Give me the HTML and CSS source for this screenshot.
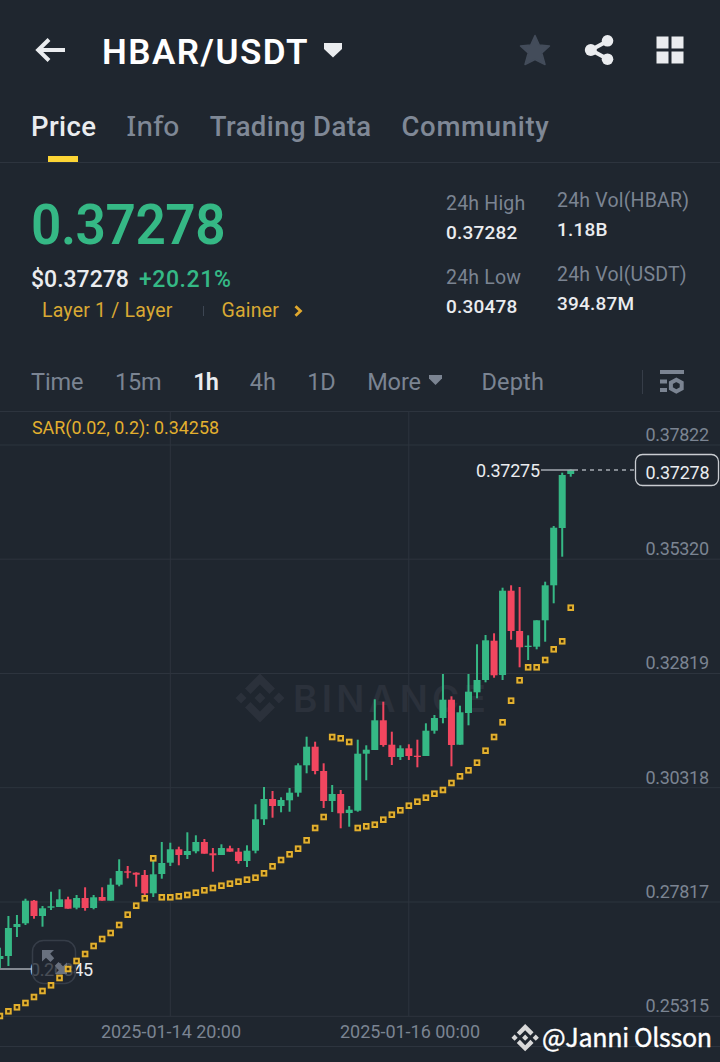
FILE: index.html
```html
<!DOCTYPE html>
<html lang="en">

<head>
    <meta charset="UTF-8">
    <meta name="viewport" content="width=device-width, initial-scale=1.0">
    <title>HBAR/USDT</title>
    <link rel="stylesheet" href="styles.css">
</head>

<body>
    <header class="topbar">
        <svg class="back" width="32" height="26" viewBox="0 0 32 26">
            <path d="M15 2.5 4.2 13 15 23.5M4.5 13H31" fill="none" stroke="#eaecef" stroke-width="4" />
        </svg>
        <h1>HBAR/USDT</h1>
        <svg class="pair-caret" width="18" height="15" viewBox="0 0 18 15">
            <path d="M0 0h18v6L9 14.500 0 6z" fill="#eaecef" />
        </svg>
        <div class="actions">
            <svg width="32" height="32" viewBox="0 0 32 32">
                <path d="M16 1.500 20.300 11 30.500 12 22.800 18.900 26 30.500 16 25.500 6 30.500 9.200 18.900 1.500 12 11.700 11z" fill="#434c5a" stroke="#434c5a" stroke-width="1.500" stroke-linejoin="round" />
            </svg>
            <svg width="30" height="32" viewBox="0 0 30 32">
                <path d="M23.500 7 7 16 23.500 25" fill="none" stroke="#eaecef" stroke-width="4" />
                <circle cx="23.500" cy="6.800" r="5.800" fill="#eaecef" />
                <circle cx="6.800" cy="16" r="6" fill="#eaecef" />
                <circle cx="23.500" cy="25.200" r="5.800" fill="#eaecef" />
            </svg>
            <svg width="28" height="28" viewBox="0 0 28 28">
                <path d="M.5.5h12v12H.5zM15.500.5h12v12h-12zM.5 15.500h12v12H.5zM15.500 15.500h12v12h-12z" fill="#eaecef" />
            </svg>
        </div>
    </header>

    <nav class="tabs">
        <a class="active">Price</a>
        <a class="info">Info</a>
        <a>Trading Data</a>
        <a class="community">Community</a>
    </nav>

    <section class="summary">
        <div class="quote">
            <div class="price">0.37278</div>
            <div class="sub"><span class="usd">$0.37278</span><span class="change">+20.21%</span></div>
            <div class="tags">
                <span>Layer 1 / Layer</span>
                <i></i>
                <span>Gainer</span>
                <svg width="9" height="12" viewBox="0 0 9 12">
                    <path d="M1.500 1.200 6.500 6l-5 4.800" fill="none" stroke="#e0a82e" stroke-width="2.800" />
                </svg>
            </div>
        </div>
        <dl class="stats">
            <dt>24h High</dt>
            <dd>0.37282</dd>
            <dt>24h Low</dt>
            <dd>0.30478</dd>
        </dl>
        <dl class="stats volume">
            <dt>24h Vol(HBAR)</dt>
            <dd>1.18B</dd>
            <dt>24h Vol(USDT)</dt>
            <dd>394.87M</dd>
        </dl>
    </section>

    <div class="intervals">
        <span>Time</span>
        <span>15m</span>
        <span class="active">1h</span>
        <span>4h</span>
        <span>1D</span>
        <span class="more">More
            <svg width="13" height="10" viewBox="0 0 13 10">
                <path d="M0 0h13v3.500L6.500 10 0 3.500z" fill="#7b8492" />
            </svg>
        </span>
        <span class="depth">Depth</span>
        <div class="settings">
            <svg width="24" height="24" viewBox="0 0 24 24">
                <path d="M0 0h24v4H0zM0 9.500h7v4H0zM0 18h7v4H0z" fill="#7b8492" />
                <path d="M16.300 9.700 21.700 12.700v5.800l-5.400 3-5.400-3v-5.800z" fill="none" stroke="#7b8492" stroke-width="4" />
            </svg>
        </div>
    </div>

    <svg id="chart" width="720" height="651" viewBox="0 411 720 651">
        <g class="grid">
            <path d="M0 411.500H720M0 445H720M0 559.200H720M0 673.500H720M0 787.700H720M0 902H720M0 1016.300H720M0 1046.500H720" />
            <path d="M170.300 411V1016M408.800 411V1016" />
        </g>
        <g class="brand">
            <path transform="translate(235.500 673.500) scale(2.040)" d="M16.624 13.920l2.718 2.715-7.353 7.353-7.353-7.352 2.717-2.716 4.636 4.659zM21.261 9.284L24 12l-2.715 2.716L18.568 12zM11.989 9.285l2.716 2.691-2.716 2.717L9.272 12zM2.716 9.284L5.409 12l-2.692 2.692L0 12zM11.989.012l7.353 7.329-2.718 2.715-4.635-4.635-4.636 4.659-2.717-2.715z" />
            <text x="293" y="711.500" textLength="193">BINANCE</text>
        </g>
        <text class="sar-label" x="32" y="434" textLength="187" lengthAdjust="spacingAndGlyphs">SAR(0.02, 0.2): 0.34258</text>
        <g class="axis">
            <text x="645.500" y="441" textLength="63.500">0.37822</text>
            <text x="645.500" y="555" textLength="63.500">0.35320</text>
            <text x="645.500" y="669.300" textLength="63.500">0.32819</text>
            <text x="645.500" y="783.700" textLength="63.500">0.30318</text>
            <text x="645.500" y="898" textLength="63.500">0.27817</text>
            <text x="645.500" y="1012.300" textLength="63.500">0.25315</text>
            <text x="101" y="1038" textLength="140">2025-01-14 20:00</text>
            <text x="340" y="1038" textLength="140">2025-01-16 00:00</text>
        </g>
        <g id="candles"></g>
        <g class="marks">
            <path d="M541 470H574M0 969H32" />
            <path d="M574 470H635" stroke-dasharray="4 4" />
            <text x="476" y="477" textLength="64">0.37275</text>
            <text x="30" y="976" textLength="63">0.26345</text>
            <rect class="tag" x="635.500" y="454.500" width="83" height="31" rx="7" />
            <text x="645.500" y="478.700" textLength="64">0.37278</text>
        </g>
        <g class="expand">
            <rect x="32.500" y="940.500" width="43" height="43" rx="11" />
            <path d="M42 950h12l-3.800 3.800 4 4.500-3.700 3.700-4.500-4.200L42 961.500zM67 974H55l3.800-3.800-4-4.500 3.700-3.700 4.500 4.200 4-3.700z" />
        </g>
        <g id="sar"></g>
        <g class="author">
            <path transform="translate(511.500 1024) scale(1.140)" d="M16.624 13.920l2.718 2.715-7.353 7.353-7.353-7.352 2.717-2.716 4.636 4.659zM21.261 9.284L24 12l-2.715 2.716L18.568 12zM11.989 9.285l2.716 2.691-2.716 2.717L9.272 12zM2.716 9.284L5.409 12l-2.692 2.692L0 12zM11.989.012l7.353 7.329-2.718 2.715-4.635-4.635-4.636 4.659-2.717-2.715z" />
            <text x="542" y="1047" textLength="170">@Janni Olsson</text>
        </g>
    </svg>

    <script src="chart.js"></script>
</body>

</html>
```
FILE: styles.css
```css
* {
    margin: 0;
    padding: 0;
    box-sizing: border-box;
}

body {
    width: 720px;
    height: 1062px;
    overflow: hidden;
    background-color: #1f262f;
    color: #eaecef;
    font-family: Roboto, "Liberation Sans", sans-serif;
}

svg {
    display: block;
    flex: none;
}

.topbar {
    display: flex;
    align-items: center;
    height: 100px;
    padding: 0 36px 0 34px;
}

.topbar h1 {
    margin-left: 36px;
    padding-top: 4px;
    width: 207px;
    font-size: 35px;
    font-weight: 600;
    letter-spacing: 1.5px;
    color: #fff;
    white-space: nowrap;
}

.pair-caret {
    margin-left: 15px;
}

.actions {
    display: flex;
    align-items: center;
    margin-left: auto;
}

.actions svg + svg {
    margin-left: 33px;
}

.actions svg:last-child {
    margin-left: 42px;
}

.tabs {
    display: flex;
    gap: 30px;
    height: 63px;
    padding-left: 31px;
    border-bottom: 1px solid #2d343e;
    font-size: 27.5px;
    font-weight: 500;
    line-height: 54px;
    letter-spacing: 0.4px;
    color: #7f8896;
}

.tabs a {
    position: relative;
    white-space: nowrap;
}

.tabs .active {
    color: #eaecef;
}

.tabs .active::after {
    content: "";
    position: absolute;
    left: 17px;
    bottom: 0;
    width: 30px;
    height: 6px;
    background-color: #fcd535;
}

.tabs .info {
    font-family: "Noto Sans", sans-serif;
    font-size: 27px;
    line-height: 52px;
    letter-spacing: 0.2px;
}

.tabs .community {
    letter-spacing: 0.7px;
}

.summary {
    display: flex;
    height: 189px;
    padding-left: 31px;
}

.quote {
    width: 415px;
    padding-top: 28px;
}

.price {
    height: 69px;
    line-height: 68px;
    font-size: 56px;
    font-weight: 600;
    letter-spacing: -0.5px;
    color: #35b885;
    transform: scaleX(0.95);
    transform-origin: left;
}

.sub {
    display: flex;
    gap: 10px;
    line-height: 39px;
    font-size: 23px;
    font-weight: 500;
}

.usd {
    letter-spacing: 0;
}

.change {
    color: #35b885;
    letter-spacing: 0.6px;
}

.tags {
    display: flex;
    align-items: center;
    height: 23px;
    padding-left: 11px;
    font-size: 19.5px;
    letter-spacing: 0.2px;
    color: #d9a933;
}

.tags i {
    width: 1px;
    height: 10px;
    margin: 0 18px 0 30px;
    background-color: #3d4653;
}

.tags svg {
    margin-left: 15px;
}

.stats {
    width: 111px;
    padding-top: 27px;
    font-size: 19.5px;
    white-space: nowrap;
}

.stats dt {
    line-height: 28px;
    color: #7b8492;
    letter-spacing: 0.2px;
}

.stats dd {
    height: 46px;
    line-height: 30px;
    font-size: 19px;
    font-weight: 500;
    letter-spacing: 0.2px;
}

.volume {
    padding-top: 24px;
}

.intervals {
    display: flex;
    align-items: center;
    gap: 31.5px;
    height: 59px;
    padding: 0 36px 0 31px;
    font-size: 23.5px;
    letter-spacing: -0.1px;
    color: #7b8492;
}

.intervals .active {
    color: #eaecef;
    font-weight: 600;
    letter-spacing: -0.7px;
}

.more {
    display: flex;
    align-items: center;
    gap: 8px;
    margin-right: 8px;
}

.more svg {
    margin-top: -3px;
}

.depth {
    letter-spacing: 0.2px;
}

.settings {
    margin-left: auto;
    padding-left: 17px;
    border-left: 1.5px solid #363d48;
}

.grid path {
    stroke: #2d343e;
}

.brand {
    fill: #2b313b;
    font: 600 37px Inter, sans-serif;
}

.sar-label {
    fill: #e3b02e;
    font-size: 18px;
}

.axis {
    fill: #7b8492;
    font-size: 18px;
}

.marks {
    fill: #eaecef;
    font-size: 18px;
}

.marks path {
    stroke: #a5aab2;
    stroke-width: 1.5;
}

.marks .tag {
    fill: #1f262f;
    stroke: #c9ccd1;
    stroke-width: 1.3;
}

.expand rect {
    fill: rgba(31, 38, 47, 0.8);
    stroke: #363d48;
    stroke-width: 1.5;
}

.expand path {
    fill: #69717f;
}

.up {
    fill: #35b885;
}

.down {
    fill: #f1465f;
}

#sar rect {
    fill: #3b2c0d;
    stroke: #e3b02e;
    stroke-width: 2;
}

.author {
    fill: #d9d9d9;
}

.author text {
    fill: #fff;
    font: 400 25px "Noto Sans CJK SC", sans-serif;
    stroke: #fff;
    stroke-width: 0.4;
}
```
FILE: chart.js
```js
// high, body top, body bottom, low, direction (1 up, 0 down), sar
const candles = [
    [947.7, 956, 959, 968, 1, 1016],
    [916, 928, 956, 966, 1, 1011.3],
    [915, 924, 927, 937, 1, 1007.3],
    [898.7, 900.7, 923.3, 925, 1, 1003],
    [900, 900.7, 916, 918.7, 0, 997],
    [906, 908.3, 916, 926.7, 1, 991],
    [891.7, 906.3, 907.7, 910, 1, 985.3],
    [889.3, 899.3, 907, 907, 1, 978],
    [896.7, 899.3, 908.7, 908.7, 0, 969],
    [895, 898, 907.7, 909.3, 1, 961],
    [887.3, 898, 908, 910.7, 0, 954],
    [895, 897.3, 908, 909.3, 1, 946],
    [887.3, 897, 900.7, 900.7, 0, 939],
    [878.3, 884.7, 900.7, 900.7, 1, 933],
    [859.3, 871, 884.7, 886.3, 1, 925],
    [866, 871.3, 872.7, 878.3, 0, 914.7],
    [872.3, 872.7, 874.7, 886.7, 0, 905.7],
    [870, 875, 893.3, 897, 0, 898.3],
    [860.7, 874.3, 893.3, 897, 1, 858.3],
    [842, 863, 874, 878.7, 1, 897.3],
    [842.7, 849.3, 862.7, 866, 1, 897.3],
    [846.7, 849.3, 855, 865.3, 0, 896.3],
    [832.3, 851, 855, 859, 1, 895],
    [835.3, 842, 851.3, 853.3, 1, 892.7],
    [839, 842, 853.7, 853.7, 0, 890.3],
    [848, 853.3, 855.3, 871.7, 0, 888],
    [844.3, 848, 855, 855, 1, 885.7],
    [845.7, 848.3, 851.7, 851.7, 0, 883.7],
    [848, 851.7, 861, 863.7, 0, 881.7],
    [845.3, 850.7, 861, 867, 1, 879.7],
    [804.3, 819.3, 850.7, 853.3, 1, 877.7],
    [787, 799, 819.3, 825, 1, 873.3],
    [791, 799, 806, 817.7, 0, 866.3],
    [797.3, 800, 806, 812.3, 1, 860],
    [788, 792.7, 800.3, 811.7, 1, 854.3],
    [763.3, 765.3, 792.7, 796.7, 1, 848.7],
    [736.7, 746.7, 765.3, 773.3, 1, 840.3],
    [741.7, 746.7, 771, 774.3, 0, 828],
    [763.3, 771, 801, 808, 0, 817],
    [785, 794, 801, 812, 1, 737],
    [790, 794, 813.3, 828.3, 0, 738.3],
    [806, 809.7, 813, 826.7, 1, 742],
    [739.7, 753.7, 810.7, 811.7, 1, 828],
    [745.3, 749.7, 753.7, 780.3, 1, 826.3],
    [699.3, 720.3, 750, 750, 1, 824.7],
    [701.7, 720.3, 745, 746.7, 0, 819.7],
    [731.7, 744.7, 757, 765, 0, 814.7],
    [745.3, 748.3, 757, 760, 1, 810.3],
    [744.3, 748.3, 756, 760, 0, 805.7],
    [739.7, 755.7, 757, 767.3, 0, 801.7],
    [723.3, 730.7, 756, 756, 1, 797.7],
    [715, 718, 730.7, 733.7, 1, 793.7],
    [674, 699.7, 718, 723.3, 1, 790],
    [696.3, 699.7, 745, 766.3, 0, 783],
    [705.7, 712.3, 744.7, 744.7, 1, 776.3],
    [674, 691.7, 713, 725.3, 1, 770.3],
    [644.3, 680, 692.3, 698.3, 1, 762.7],
    [635, 640.3, 680, 682.3, 1, 750.7],
    [633.3, 640.7, 675.3, 677.7, 0, 737],
    [587.7, 590.7, 675, 680, 1, 722.3],
    [585.3, 590.7, 631, 639.7, 0, 700.7],
    [587, 631, 647.3, 667.3, 0, 680.3],
    [635.3, 645.7, 647, 660, 1, 667.3],
    [620.3, 620.3, 646.7, 649.3, 1, 667.3],
    [581.7, 585.3, 620.3, 641.7, 1, 660],
    [526, 527.7, 585.3, 603.3, 1, 649.3],
    [472.7, 475, 528, 556.7, 1, 641.3],
    [469.3, 470, 474, 476.7, 1, 607.7]
];

const step = 8.52;
let bars = '';
let dots = '';

candles.forEach(([high, top, bottom, low, up, sar], i) => {
    const x = i * step - 0.1;
    bars += `<g class="${up ? 'up' : 'down'}">
        <rect x="${x - 1}" y="${high}" width="2" height="${low - high}"/>
        <rect x="${x - 3.5}" y="${top}" width="7" height="${bottom - top}"/>
    </g>`;
    dots += `<rect x="${x - 2.3}" y="${sar - 2.3}" width="4.6" height="4.6"/>`;
});

document.getElementById('candles').innerHTML = bars;
document.getElementById('sar').innerHTML = dots;
```
